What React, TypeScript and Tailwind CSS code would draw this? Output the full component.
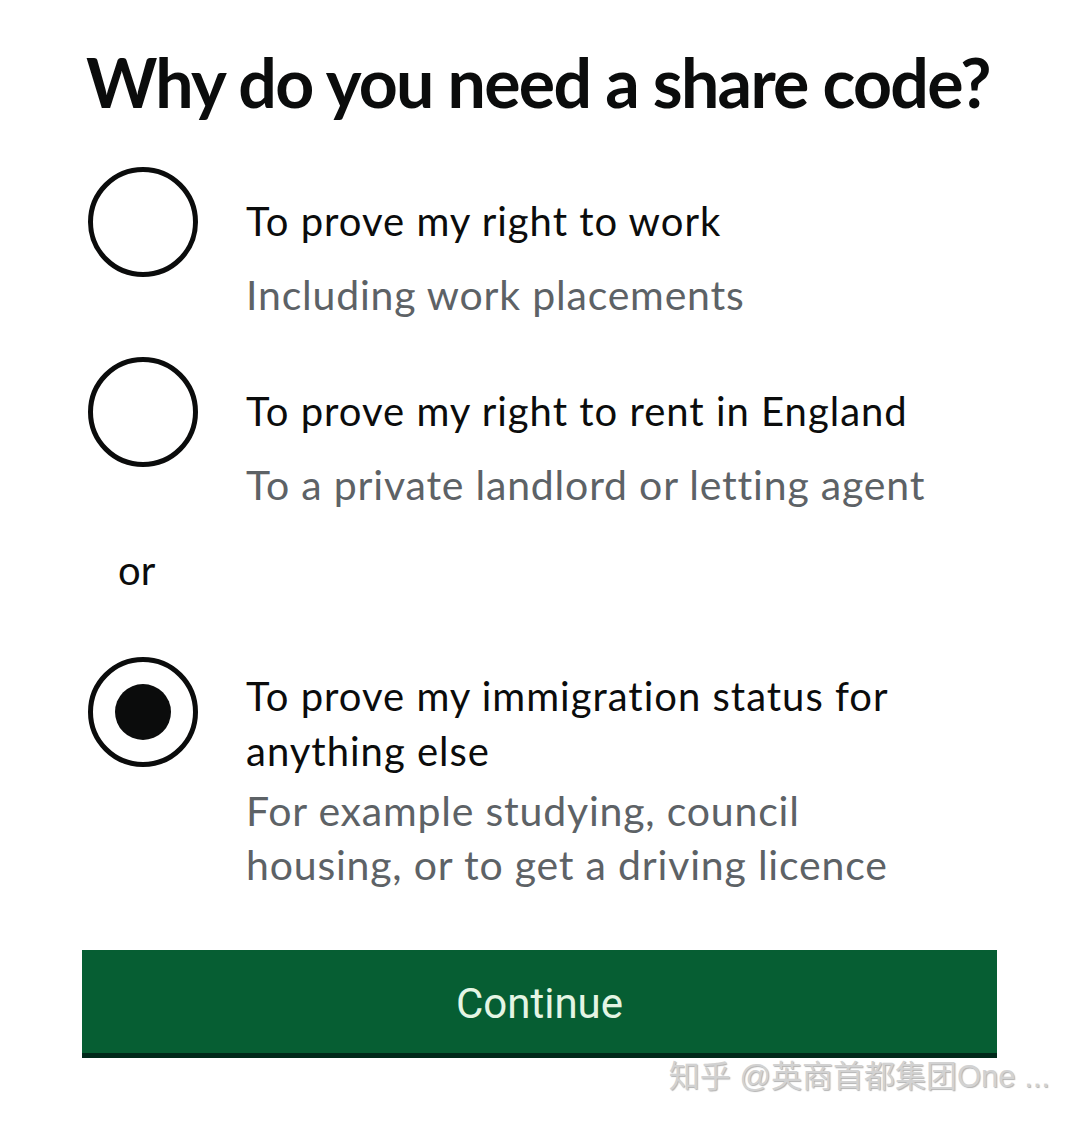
import React, { useState } from 'react'

type Option = {
  id: string
  label: string[]
  hint: string[]
  labelPt: string
  hintMt: string
  rowMt: string
}

const options: Option[] = [
  {
    id: 'work',
    label: ['To prove my right to work'],
    hint: ['Including work placements'],
    labelPt: 'pt-[27px]',
    hintMt: 'mt-[19px]',
    rowMt: 'mt-[51px]',
  },
  {
    id: 'rent',
    label: ['To prove my right to rent in England'],
    hint: ['To a private landlord or letting agent'],
    labelPt: 'pt-[27px]',
    hintMt: 'mt-[19px]',
    rowMt: 'mt-[35px]',
  },
  {
    id: 'other',
    label: ['To prove my immigration status for', 'anything else'],
    hint: ['For example studying, council', 'housing, or to get a driving licence'],
    labelPt: 'pt-[12px]',
    hintMt: 'mt-[5px]',
    rowMt: 'mt-[59px]',
  },
]

function Radio({ checked }: { checked: boolean }) {
  return (
    <span className="ml-[6px] flex h-[110px] w-[110px] shrink-0 items-center justify-center rounded-full border-[5px] border-[#0b0c0c] bg-white">
      {checked && <span className="h-[56px] w-[56px] rounded-full bg-[#0b0c0c]" />}
    </span>
  )
}

function OptionRow({ option, checked, onSelect }: { option: Option; checked: boolean; onSelect: () => void }) {
  return (
    <label className={`flex cursor-pointer items-start gap-[48px] ${option.rowMt}`} onClick={onSelect}>
      <Radio checked={checked} />
      <div className={option.labelPt}>
        <div className="text-[40px] leading-[55px] tracking-[1px] text-[#0b0c0c]">
          {option.label.map(line => (
            <div key={line}>{line}</div>
          ))}
        </div>
        <div className={`text-[41px] leading-[54px] tracking-[0.8px] text-[#5d6266] ${option.hintMt}`}>
          {option.hint.map(line => (
            <div key={line}>{line}</div>
          ))}
        </div>
      </div>
    </label>
  )
}

export default function App() {
  const [selected, setSelected] = useState('other')

  return (
    <div
      className="min-h-screen bg-white [font-variant-ligatures:none]"
      style={{ fontFamily: 'Lato, "Noto Sans", sans-serif' }}
    >
      <div className="pl-[82px] pr-[83px] pt-[48px]">
        <h1 className="ml-[4px] text-[68px] font-bold leading-none tracking-[-1.7px] text-[#0b0c0c]">
          Why do you need a share code?
        </h1>

        <OptionRow option={options[0]} checked={selected === 'work'} onSelect={() => setSelected('work')} />
        <OptionRow option={options[1]} checked={selected === 'rent'} onSelect={() => setSelected('rent')} />

        <p className="ml-[36px] mt-[31px] text-[40px] leading-[55px] text-[#0b0c0c]">or</p>

        <OptionRow option={options[2]} checked={selected === 'other'} onSelect={() => setSelected('other')} />

        <button
          type="button"
          className="mt-[58px] flex h-[103px] w-full items-center justify-center bg-[#065e33] pt-[4px] text-[42px] text-[#e4f5e4] shadow-[0_5px_0_#00291a]"
          style={{ fontFamily: 'Roboto, sans-serif' }}
        >
          Continue
        </button>
      </div>

      <div className="flex justify-end pr-[30px] pt-[7px]">
        <span
          className="text-[31px] font-normal leading-[34px] text-[#d2d2d2] [text-shadow:1px_1px_1px_rgba(0,0,0,0.3)]"
          style={{ fontFamily: '"Liberation Sans", "Noto Sans CJK SC", sans-serif' }}
        >
          知乎 @英商首都集团One ...
        </span>
      </div>
    </div>
  )
}
